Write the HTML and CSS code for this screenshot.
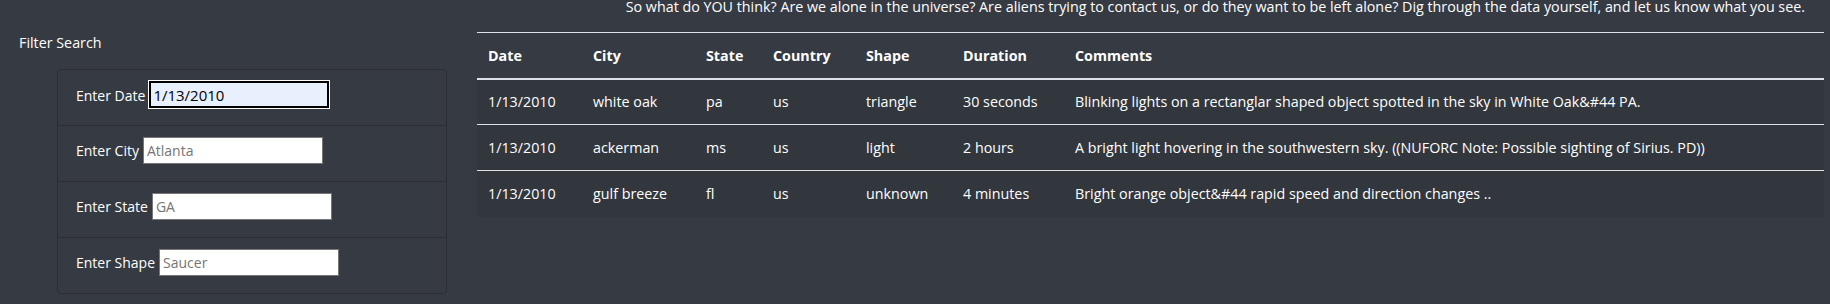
FILE: index.html
```html
<!DOCTYPE html>
<html lang="en">
<head>
<meta charset="utf-8">
<title>UFO Sightings</title>
<link rel="stylesheet" href="styles.css">
</head>
<body>
<div class="page">
  <aside class="sidebar">
    <div class="filter-title">Filter Search</div>
    <ul class="filters">
      <li class="filter-item">
        <label class="filter-label" for="datetime">Enter Date</label>
        <input class="filter-input is-focused" id="datetime" type="text" value="1/13/2010">
      </li>
      <li class="filter-item">
        <label class="filter-label" for="city">Enter City</label>
        <input class="filter-input" id="city" type="text" placeholder="Atlanta">
      </li>
      <li class="filter-item">
        <label class="filter-label" for="state">Enter State</label>
        <input class="filter-input" id="state" type="text" placeholder="GA">
      </li>
      <li class="filter-item">
        <label class="filter-label" for="shape">Enter Shape</label>
        <input class="filter-input" id="shape" type="text" placeholder="Saucer">
      </li>
    </ul>
  </aside>
  <main class="content">
    <p class="intro">So what do YOU think? Are we alone in the universe? Are aliens trying to contact us, or do they want to be left alone? Dig through the data yourself, and let us know what you see.</p>
    <table class="ufo-table">
      <colgroup>
        <col class="c-date"><col class="c-city"><col class="c-state"><col class="c-country"><col class="c-shape"><col class="c-duration"><col class="c-comments">
      </colgroup>
      <thead>
        <tr><th>Date</th><th>City</th><th>State</th><th>Country</th><th>Shape</th><th>Duration</th><th>Comments</th></tr>
      </thead>
      <tbody>
        <tr><td>1/13/2010</td><td>white oak</td><td>pa</td><td>us</td><td>triangle</td><td>30 seconds</td><td>Blinking lights on a rectanglar shaped object spotted in the sky in White Oak&amp;#44 PA.</td></tr>
        <tr><td>1/13/2010</td><td>ackerman</td><td>ms</td><td>us</td><td>light</td><td>2 hours</td><td>A bright light hovering in the southwestern sky. ((NUFORC Note: Possible sighting of Sirius. PD))</td></tr>
        <tr><td>1/13/2010</td><td>gulf breeze</td><td>fl</td><td>us</td><td>unknown</td><td>4 minutes</td><td>Bright orange object&amp;#44 rapid speed and direction changes ..</td></tr>
      </tbody>
    </table>
  </main>
</div>
</body>
</html>
```

FILE: styles.css
```css
* { box-sizing: border-box; }

html, body {
  margin: 0;
  padding: 0;
  height: 100%;
  overflow: hidden;
}

body {
  background: #363a42;
  color: #ffffff;
  font-family: "Open Sans", "Noto Sans", sans-serif;
  font-size: 14.3px;
}

.page {
  display: flex;
  align-items: flex-start;
}

.sidebar {
  width: 465px;
  flex: 0 0 465px;
  padding: 33px 0 0 19px;
}

.filter-title {
  font-size: 14.3px;
  line-height: 20px;
}

.filters {
  list-style: none;
  margin: 16px 0 0 38px;
  padding: 0;
  width: 390px;
  border: 1px solid #2b2f35;
  border-radius: 4px;
}

.filter-item {
  display: flex;
  align-items: baseline;
  height: 56px;
  padding: 11px 0 0 18px;
  border-top: 1px solid #2b2f35;
}

.filter-item:first-child {
  border-top: 0;
  height: 55px;
}

.filter-label {
  font-size: 14px;
  margin-right: 4px;
}

.filter-input {
  width: 180px;
  height: 27px;
  border: 1px solid #767676;
  background: #ffffff;
  padding: 0 3px;
  font-family: "Open Sans", "Noto Sans", sans-serif;
  font-size: 14px;
  color: #000000;
  outline: none;
}

.filter-input::placeholder {
  color: #757575;
}

.filter-input.is-focused {
  background: #e8f0fe;
  border: 2px solid #000000;
  box-shadow: 0 0 0 1px #ffffff;
  padding: 0 2px;
  font-size: 15px;
}

.content {
  flex: 1;
  padding: 0 6px 0 12px;
}

.intro {
  margin: -3px 0 15px 0;
  line-height: 20px;
  text-align: right;
  padding-right: 19px;
}

.ufo-table {
  width: 100%;
  border-collapse: collapse;
  table-layout: fixed;
  border-top: 1px solid #dee2e6;
}

.c-date { width: 105px; }
.c-city { width: 113px; }
.c-state { width: 67px; }
.c-country { width: 93px; }
.c-shape { width: 97px; }
.c-duration { width: 112px; }

.ufo-table th,
.ufo-table td {
  text-align: left;
  padding: 0 11px;
  height: 46px;
  vertical-align: middle;
  white-space: nowrap;
}

.ufo-table th {
  font-weight: 700;
  border-bottom: 2px solid #dee2e6;
}

.ufo-table tbody tr {
  background: #32363d;
}

.ufo-table tbody tr + tr td {
  border-top: 1px solid #dee2e6;
}
```
